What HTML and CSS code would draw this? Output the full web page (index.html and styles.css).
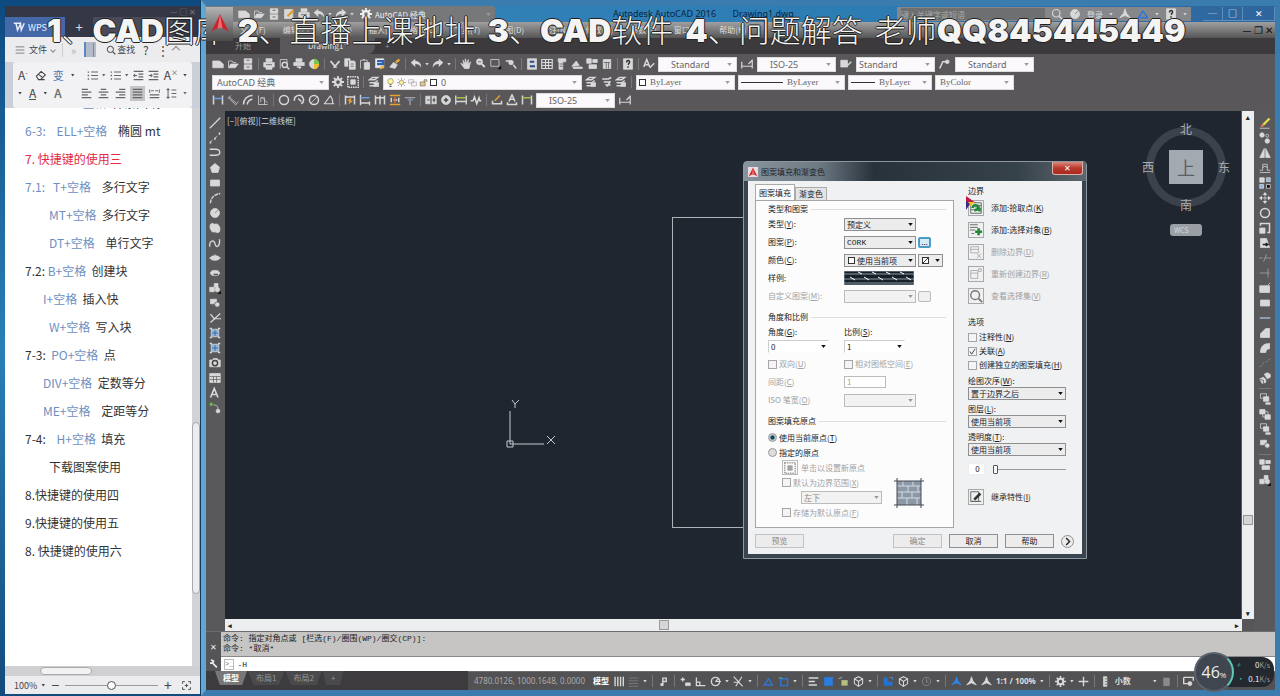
FILE: index.html
```
<!DOCTYPE html>
<html lang="zh-CN">
<head>
    <meta charset="UTF-8">
    <meta name="viewport" content="width=device-width, initial-scale=1.0">
    <title>Autodesk AutoCAD 2016 - Drawing1.dwg</title>
    <link rel="stylesheet" href="styles.css">
</head>
<body>

    <!-- Icon sprite -->
    <svg class="sprite" aria-hidden="true">
        <symbol id="i-new" viewBox="0 0 16 16"><path fill="currentColor" d="M1 4h9l5 4v5H1z"/></symbol>
        <symbol id="i-open" viewBox="0 0 16 16"><path d="M2 12V4h5l1 2h4"/><path fill="currentColor" d="M2 13l3-5h10l-4 5z"/></symbol>
        <symbol id="i-save" viewBox="0 0 16 16"><path fill="currentColor" d="M3 1h10v6H3zM3 9h10v6H3z"/><path stroke="#444" d="M6 3h4M6 12h4"/></symbol>
        <symbol id="i-saveas" viewBox="0 0 16 16"><path fill="currentColor" d="M2 2h11v12H2z"/><path stroke="#e0a030" stroke-width="3" d="M6 11l8-8"/></symbol>
        <symbol id="i-print" viewBox="0 0 16 16"><path fill="currentColor" d="M4 1h8v4H4zM1 6h14v6H1z"/><path stroke="#444" d="M4 9h8"/><path fill="currentColor" d="M4 11h8v4H4z"/></symbol>
        <symbol id="i-preview" viewBox="0 0 16 16"><path d="M3 14V2h9v5"/><circle cx="9" cy="9" r="3.5" stroke-width="2"/><path stroke-width="2" d="M12 12l3 3"/></symbol>
        <symbol id="i-publish" viewBox="0 0 16 16"><path fill="currentColor" d="M4 1h8v4H4zM1 6h14v4H1z"/><path stroke-width="2" d="M5 12h5M8 14l3-2"/></symbol>
        <symbol id="i-pie" viewBox="0 0 16 16"><circle cx="8" cy="8" r="6" fill="#d8d8d8"/><path fill="#79c64c" stroke="none" d="M8 8V1a7 7 0 0 1 7 7z"/><path fill="#efbe37" stroke="none" d="M8 8h7a7 7 0 0 1-7 7z"/></symbol>
        <symbol id="i-cut" viewBox="0 0 16 16"><path stroke-width="2.4" d="M2 4l6 7 6-7"/><path stroke-width="2" d="M6 13l2-2 2 2"/></symbol>
        <symbol id="i-copy" viewBox="0 0 16 16"><path fill="currentColor" d="M1 1h7v10H1zM7 4h7l1 2v9H7z"/><path stroke="#555" d="M6 3v12M9 8h4M9 11h4"/></symbol>
        <symbol id="i-paste" viewBox="0 0 16 16"><path d="M2 14V3h9v3M5 2h3"/><path fill="currentColor" d="M7 6h7v9H7z"/></symbol>
        <symbol id="i-match" viewBox="0 0 16 16"><path fill="#e8eef6" d="M2 1h11v12H2z"/><path stroke="#2f62b0" stroke-width="3" d="M4 4h8v4H4"/><path stroke="#e5b640" stroke-width="3" d="M8 14l5-3"/></symbol>
        <symbol id="i-brush" viewBox="0 0 16 16"><path fill="currentColor" d="M1 12l5-6 5 3-3 5z"/><path stroke="#e5a63c" stroke-width="3" d="M9 6l5-4"/></symbol>
        <symbol id="i-undo" viewBox="0 0 16 16"><path fill="currentColor" stroke="none" d="M1 6l6-5v3c5 0 8 3 8 9-2-4-4-5-8-5v4z"/></symbol>
        <symbol id="i-redo" viewBox="0 0 16 16"><path fill="currentColor" stroke="none" d="M15 6L9 1v3c-5 0-8 3-8 9 2-4 4-5 8-5v4z"/></symbol>
        <symbol id="i-pan" viewBox="0 0 16 16"><path fill="currentColor" d="M1 7l4 2-1-6 3 5V1l2 7 2-6v7l3-4-2 9H6z"/></symbol>
        <symbol id="i-zoom" viewBox="0 0 16 16"><circle cx="6" cy="5" r="4" fill="currentColor"/><path stroke-width="2.5" d="M9 8l4 4"/><path stroke="#555" d="M4 5h4"/></symbol>
        <symbol id="i-zoomwin" viewBox="0 0 16 16"><path d="M1 2h11v9H1z"/><path fill="#111" stroke="none" d="M15 10v5h-5z"/></symbol>
        <symbol id="i-zoomprev" viewBox="0 0 16 16"><path stroke-width="2" d="M1 4h6"/><circle cx="8" cy="6" r="3" fill="currentColor"/><path stroke-width="2" d="M11 9l4 5"/></symbol>
        <symbol id="i-props" viewBox="0 0 16 16"><path fill="currentColor" d="M2 1h12v14H2z"/><path stroke="#2d4b8d" stroke-width="2.5" d="M5 5h6M5 11h7"/></symbol>
        <symbol id="i-grid" viewBox="0 0 16 16"><path stroke-width="1.6" d="M1 2h14v12H1zM1 6h14M1 10h14M6 2v12M10 2v12"/></symbol>
        <symbol id="i-palette" viewBox="0 0 16 16"><path fill="currentColor" d="M3 1h10v4H9v10H4V5H3z"/><path stroke="#555" d="M5 8h4M5 11h4"/></symbol>
        <symbol id="i-sheet" viewBox="0 0 16 16"><path fill="currentColor" d="M1 11l6-7 4 6zM3 12h12v2H3z"/></symbol>
        <symbol id="i-markup" viewBox="0 0 16 16"><path fill="currentColor" d="M1 1h6v6H1zM9 2h6v4H9zM4 9h10v5H4z"/></symbol>
        <symbol id="i-calc" viewBox="0 0 16 16"><path fill="currentColor" d="M3 2h10v12H3z"/><path stroke="#555" d="M4 6h8M7 6v8M10 6v8"/></symbol>
        <symbol id="i-help" viewBox="0 0 16 16"><path fill="currentColor" d="M2 1h12v14H2z"/><path stroke="#333" stroke-width="2" d="M6 6c0-4 5-3 4 0L8 9M8 11v2"/></symbol>
        <symbol id="i-text" viewBox="0 0 16 16"><path stroke-width="2.2" d="M2 14L7 2l5 12M4 10h6"/></symbol>
        <symbol id="i-textstyle" viewBox="0 0 16 16"><path stroke-width="2" d="M1 12L5 2l4 10M2 9h6M9 13l6-6"/></symbol>
        <symbol id="i-dimstyle" viewBox="0 0 16 16"><path stroke-width="1.6" d="M1 5v9M15 2v12M1 11h14M10 8l5-5"/></symbol>
        <symbol id="i-tablestyle" viewBox="0 0 16 16"><path fill="currentColor" d="M1 3h9v9H1z"/><path stroke-width="2" d="M9 11l6-6"/></symbol>
        <symbol id="i-leader" viewBox="0 0 16 16"><path stroke-width="2" d="M1 14l4-9h6"/><circle cx="11" cy="5" r="2.5" fill="currentColor"/></symbol>
        <symbol id="i-gear" viewBox="0 0 16 16"><circle cx="8" cy="8" r="4" stroke-width="3"/><path stroke-width="2.4" d="M8 0v4M8 12v4M0 8h4M12 8h4M2.500 2.500l3 3M10.500 10.500l3 3M2.500 13.500l3-3M10.500 5.500l3-3"/></symbol>
        <symbol id="i-select" viewBox="0 0 16 16"><path stroke-dasharray="2 1" stroke-width="2" d="M1 1h14v14H1z"/><path fill="currentColor" d="M5 5h6v6H5z"/></symbol>
        <symbol id="i-layers" viewBox="0 0 16 16"><path stroke-width="1.8" d="M2 5h7l4-3H6zM2 9h7l4-3M2 13h7l5-4"/><path fill="currentColor" d="M8 9h6v5H8z"/></symbol>
        <symbol id="i-layerprev" viewBox="0 0 16 16"><path stroke-width="2" d="M3 4h8l4-2M5 8h8M7 12h7M9 14l5-7"/></symbol>
        <symbol id="i-bulb" viewBox="0 0 16 16"><circle cx="8" cy="6" r="5" fill="#fbf6a0" stroke="#776"/><path stroke="#665" stroke-width="2" d="M6 12h4M6 15h4"/></symbol>
        <symbol id="i-sun" viewBox="0 0 16 16"><circle cx="8" cy="8" r="4" fill="#f8ef9a" stroke="#776"/><path stroke="#665" d="M8 0v3M8 13v3M0 8h3M13 8h3M2 2l2 2M12 12l2 2M2 14l2-2M12 4l2-2"/></symbol>
        <symbol id="i-vp" viewBox="0 0 16 16"><path stroke="#999" d="M1 3h9v6H1zM6 7h9v7H6z"/></symbol>
        <symbol id="i-lock" viewBox="0 0 16 16"><path fill="#e0c990" stroke="#665" d="M2 7h9v7H2zM9 7V3h5v4"/></symbol>
        <!-- Dimension toolbar -->
        <symbol id="i-dimlin" viewBox="0 0 16 16"><path stroke-width="2" d="M2 2v12M14 2v12"/><path stroke="#6ca0e4" stroke-width="2" d="M2 6h12"/></symbol>
        <symbol id="i-dimali" viewBox="0 0 16 16"><path d="M2 5l9 9M5 2l-4 4M15 10l-4 5M3 4l9 8"/></symbol>
        <symbol id="i-dimarc" viewBox="0 0 16 16"><path stroke-width="2" d="M2 14C2 7 7 2 14 2M7 14c0-3 3-7 7-7"/></symbol>
        <symbol id="i-dimord" viewBox="0 0 16 16"><path d="M2 2v12h12M5 11V5h5v9M6 4l8 8"/></symbol>
        <symbol id="i-circle" viewBox="0 0 16 16"><circle cx="8" cy="8" r="6" stroke-width="2"/></symbol>
        <symbol id="i-jog" viewBox="0 0 16 16"><path stroke-width="2" d="M2 9a6 6 0 1 1 9 4M7 6l4 4"/></symbol>
        <symbol id="i-dia" viewBox="0 0 16 16"><circle cx="8" cy="8" r="6" stroke-width="2"/><path d="M4 12l8-8"/></symbol>
        <symbol id="i-angle" viewBox="0 0 16 16"><path stroke-width="1.6" d="M1 13h14M2 13L10 2M10 3c3 3 3 6 3 10"/></symbol>
        <symbol id="i-quick" viewBox="0 0 16 16"><path stroke-width="2" d="M2 2v12M14 2v12M2 4h12"/><path fill="#e6a331" stroke="none" d="M5 8l5-3-1 4h3l-6 5 1-4z"/></symbol>
        <symbol id="i-base" viewBox="0 0 16 16"><path stroke-width="1.8" d="M2 1v14M2 12h12M14 10v5"/><path stroke="#6ca0e4" stroke-width="2" d="M2 5h12"/></symbol>
        <symbol id="i-cont" viewBox="0 0 16 16"><path stroke-width="2" d="M2 2v12M8 2v12M14 2v12M2 5h12"/></symbol>
        <symbol id="i-space" viewBox="0 0 16 16"><path stroke="#e6a331" stroke-width="2" d="M1 2h14M1 14h14"/><path stroke-width="2" d="M3 5v6M13 5v6M6 8h5"/><path stroke="#df6a35" stroke-width="2" d="M8 4v8"/></symbol>
        <symbol id="i-break" viewBox="0 0 16 16"><path d="M1 5h14M8 6v9"/><path stroke="#6c8bb4" stroke-width="2" d="M5 8h7"/></symbol>
        <symbol id="i-tol" viewBox="0 0 16 16"><path fill="currentColor" d="M1 3h14v10H1z"/><path stroke="#444" stroke-width="1.5" d="M8 3v10M3 8h3M12 5v6M10 8h4"/></symbol>
        <symbol id="i-center" viewBox="0 0 16 16"><circle cx="8" cy="8" r="6" fill="currentColor"/><path stroke="#444" stroke-width="2" d="M8 5v6M5 8h6"/></symbol>
        <symbol id="i-inspect" viewBox="0 0 16 16"><path stroke-width="1.8" d="M1 2v12M15 2v12M1 10h14"/><path stroke="#a5bf45" stroke-width="2" d="M2 5h12"/></symbol>
        <symbol id="i-jogline" viewBox="0 0 16 16"><path stroke-width="2" d="M1 9h3l2-5 3 9 3-8 1 4h2"/></symbol>
        <symbol id="i-dimedit" viewBox="0 0 16 16"><path stroke-width="2" d="M1 13h14M2 9v5M14 9v5"/><path stroke="#e6a331" stroke-width="2" d="M5 9l7-7"/></symbol>
        <symbol id="i-dimtext" viewBox="0 0 16 16"><path stroke-width="2" d="M1 14h14M2 11v4M14 11v4M4 10l4-9 4 9M5 7h6"/></symbol>
        <symbol id="i-dimupd" viewBox="0 0 16 16"><path stroke-width="2" d="M2 2v12M14 2v12"/><path stroke="#a5bf45" stroke-width="2" d="M2 5h12"/></symbol>
        <!-- Draw toolbar -->
        <symbol id="i-line" viewBox="0 0 16 16"><path stroke-width="1.6" d="M1 15L15 1"/></symbol>
        <symbol id="i-xline" viewBox="0 0 16 16"><path stroke-dasharray="5 3" d="M1 14L15 2"/><path stroke-width="2.5" d="M1 14h2M13 2h2M7 9h2"/></symbol>
        <symbol id="i-pline" viewBox="0 0 16 16"><path stroke-width="1.8" d="M1 3h8c7 0 7 8 1 8H1"/></symbol>
        <symbol id="i-polygon" viewBox="0 0 16 16"><path fill="currentColor" d="M8 2l6 5-2 7H4L2 7z"/></symbol>
        <symbol id="i-rect" viewBox="0 0 16 16"><path fill="currentColor" d="M2 4h12v8H2z"/></symbol>
        <symbol id="i-arc" viewBox="0 0 16 16"><path stroke-width="1.8" stroke-dasharray="5 1" d="M2 15C2 8 7 3 15 2"/></symbol>
        <symbol id="i-disc" viewBox="0 0 16 16"><circle cx="8" cy="8" r="6" fill="currentColor"/><path stroke="#777" d="M8 8l4-4"/></symbol>
        <symbol id="i-cloud" viewBox="0 0 16 16"><path fill="currentColor" d="M2 3c2-2 4-1 5 0 3-1 6 0 6 2 2 2 2 4 1 8-3 2-5 1-6 0-3 1-5 0-5-2-2-2-2-5-1-8z"/></symbol>
        <symbol id="i-spline" viewBox="0 0 16 16"><path stroke-width="1.8" d="M1 13c-1-9 6-10 7-4s7 5 6-6"/></symbol>
        <symbol id="i-ellipse" viewBox="0 0 16 16"><ellipse cx="8" cy="8" rx="6" ry="3" fill="currentColor"/><path d="M0 8h16M8 3v8"/></symbol>
        <symbol id="i-ellarc" viewBox="0 0 16 16"><ellipse cx="8" cy="8" rx="6" ry="3.500" fill="currentColor"/><path stroke="#555" stroke-width="2" d="M6 10h6"/></symbol>
        <symbol id="i-insert" viewBox="0 0 16 16"><path fill="currentColor" d="M1 7h6v6H1zM7 2h5v5H7z"/><circle cx="11" cy="10" r="3" fill="currentColor"/><path fill="#111" stroke="none" d="M16 12v4h-5z"/></symbol>
        <symbol id="i-block" viewBox="0 0 16 16"><path fill="currentColor" d="M2 3h8v6H2z"/><circle cx="11" cy="10" r="3.500" fill="currentColor" stroke="#555"/></symbol>
        <symbol id="i-point" viewBox="0 0 16 16"><path stroke-width="1.6" d="M2 3l6 7M15 2L2 14M8 9h8"/></symbol>
        <symbol id="i-hatch" viewBox="0 0 16 16"><path fill="#8cb7e2" d="M3 3h10v10H3z"/><path stroke-width="2" d="M1 2h3M12 2h3M1 14h3M12 14h3"/><path stroke="#36577f" d="M4 8h8M8 4v8"/></symbol>
        <symbol id="i-region" viewBox="0 0 16 16"><path fill="currentColor" d="M1 4h4l1-2h5l1 2h3v9H1z"/><circle cx="8" cy="8" r="3.500" stroke="#444" stroke-width="2"/></symbol>
        <symbol id="i-table" viewBox="0 0 16 16"><path fill="currentColor" d="M1 2h14v12H1z"/><path stroke="#666" d="M1 6h14M1 10h14M6 6v8M10 6v8"/></symbol>
        <symbol id="i-addsel" viewBox="0 0 16 16"><path stroke="#6cbf4b" stroke-width="2.5" d="M1 3h4M3 1v4"/><path d="M6 4c5 0 6 2 6 6"/><circle cx="12" cy="12" r="2.500" fill="currentColor"/></symbol>
        <!-- Modify toolbar -->
        <symbol id="i-erase" viewBox="0 0 16 16"><path stroke="#eadc4a" stroke-width="3" d="M5 11l9-9"/><path stroke="#e0795c" stroke-width="3" d="M3 13l3-3"/><path d="M1 15h13"/></symbol>
        <symbol id="i-copyobj" viewBox="0 0 16 16"><circle cx="4" cy="4" r="3" fill="currentColor"/><circle cx="11" cy="5" r="2"/><circle cx="11" cy="12" r="3" fill="currentColor"/></symbol>
        <symbol id="i-mirror" viewBox="0 0 16 16"><path fill="currentColor" d="M7 2v12H1zM9 2v12h6z"/></symbol>
        <symbol id="i-offset" viewBox="0 0 16 16"><path d="M1 14h14M1 11h4C3 4 13 4 11 11h4M5 8V3h6v5"/></symbol>
        <symbol id="i-array" viewBox="0 0 16 16"><path fill="currentColor" d="M1 1h6v6H1z"/><path fill="#8cb7e2" d="M10 1h5v5h-5zM1 10h5v5H1z"/><path fill="#111" d="M10 10h5v5h-5z"/></symbol>
        <symbol id="i-move" viewBox="0 0 16 16"><path fill="currentColor" stroke="none" d="M8 0l3 4H5zM8 16l3-4H5zM0 8l4-3v6zM16 8l-4-3v6z"/><path d="M8 4v8M4 8h8"/></symbol>
        <symbol id="i-scale" viewBox="0 0 16 16"><path fill="currentColor" d="M1 8h7v7H1z"/><path stroke-width="2" d="M2 5V2h12v12h-3"/></symbol>
        <symbol id="i-stretch" viewBox="0 0 16 16"><path fill="currentColor" d="M2 2h8l4 12H2z"/><path stroke="#222" stroke-width="2" d="M5 10h6M9 8l3 2-3 2"/></symbol>
        <symbol id="i-trim" viewBox="0 0 16 16"><path stroke="#aaa" d="M0 8h5M8 8h8M6 13L10 3"/></symbol>
        <symbol id="i-extend" viewBox="0 0 16 16"><path stroke="#aaa" d="M1 8h8M12 2v12M9 8h5"/></symbol>
        <symbol id="i-breakat" viewBox="0 0 16 16"><path fill="currentColor" d="M1 5h13v9H1z"/><path d="M12 4l3-3"/></symbol>
        <symbol id="i-join" viewBox="0 0 16 16"><path stroke="#9fb5cf" stroke-width="2" d="M1 8h5M10 8h5M6 8h4"/></symbol>
        <symbol id="i-chamfer" viewBox="0 0 16 16"><path fill="currentColor" d="M2 14V9l7-7h5v12z"/></symbol>
        <symbol id="i-fillet" viewBox="0 0 16 16"><path fill="currentColor" d="M2 14C2 6 6 2 14 2v7c-3 0-5 2-5 5z"/></symbol>
        <symbol id="i-blend" viewBox="0 0 16 16"><path stroke="#8ba2bd" stroke-dasharray="3 2" d="M1 13c4-1 3-5 7-6s4-2 7-5"/></symbol>
        <symbol id="i-explode" viewBox="0 0 16 16"><path fill="currentColor" d="M1 9l5-2 3 3v4l-5 1zM7 3l4-2 4 2v4l-4 2z"/><path stroke="#555" d="M1 10l5 1v4"/></symbol>
        <symbol id="i-front" viewBox="0 0 16 16"><path d="M2 1h8v6H2z"/><path fill="currentColor" d="M6 5h7v6H6zM9 13h6v2H9z"/></symbol>
        <symbol id="i-back" viewBox="0 0 16 16"><path fill="currentColor" d="M1 2h7v6H1zM8 9h7v6H8z"/><path d="M5 5h7v7H5z"/></symbol>
        <!-- Status bar -->
        <symbol id="i-bars" viewBox="0 0 16 16"><path stroke-width="2" d="M3 1v14M7 1v14M11 1v14M15 1v14"/></symbol>
        <symbol id="i-dim" viewBox="0 0 16 16"><path stroke="#888" d="M1 3h14M1 7h14M1 11h14M1 15h14"/></symbol>
        <symbol id="i-infer" viewBox="0 0 16 16"><path stroke-width="2" d="M7 14V3h5v5H7"/><path fill="currentColor" d="M4 11h3v3H4z"/></symbol>
        <symbol id="i-dyn" viewBox="0 0 16 16"><path stroke-width="2" d="M1 5h6M4 2v6"/><path fill="currentColor" d="M8 10h7v4H8z"/></symbol>
        <symbol id="i-ortho" viewBox="0 0 16 16"><path stroke-width="1.800" d="M2 2v12h13M2 9h5v5"/></symbol>
        <symbol id="i-polar" viewBox="0 0 16 16"><circle cx="8" cy="8" r="6" stroke-width="2"/><path stroke-width="1.600" d="M8 8h8M8 8l5-5"/></symbol>
        <symbol id="i-iso" viewBox="0 0 16 16"><path stroke-width="1.600" d="M1 1l13 14M13 1L4 15M1 9h7"/></symbol>
        <symbol id="i-track" viewBox="0 0 16 16"><path stroke="#2f76d8" stroke-width="2" d="M2 13l6-9 6 9z"/></symbol>
        <symbol id="i-osnap" viewBox="0 0 16 16"><path stroke="#2f76d8" stroke-width="2" d="M4 4h10v10H4z"/><path stroke="#4cae5a" stroke-width="2" d="M1 3h5"/></symbol>
        <symbol id="i-lines" viewBox="0 0 16 16"><path stroke-width="2.200" d="M1 3h14M1 8h9M1 13h12"/></symbol>
        <symbol id="i-blue" viewBox="0 0 16 16"><path fill="#287fe0" stroke="#2f76d8" d="M2 2h12v12H2z"/></symbol>
        <symbol id="i-cycle" viewBox="0 0 16 16"><path fill="#b5bf82" stroke="none" d="M5 6h9v8H5z"/><path d="M1 4l5-2"/></symbol>
        <symbol id="i-cube" viewBox="0 0 16 16"><path stroke-width="1.500" d="M8 1l6 3v7l-6 4-6-4V4zM2 4l6 4 6-4M8 8v7"/></symbol>
        <symbol id="i-gizmo" viewBox="0 0 16 16"><path fill="#2373ce" stroke="none" d="M1 2h6v6h7v6H1z"/><path stroke="#5199e8" d="M9 2h5v4"/></symbol>
        <symbol id="i-clock" viewBox="0 0 16 16"><circle cx="8" cy="8" r="6" stroke="#999"/><path stroke="#999" d="M8 4v5h3"/></symbol>
        <symbol id="i-anno" viewBox="0 0 16 16"><path fill="currentColor" d="M8 1l2 6 5 6-7-3-7 3 5-6z"/></symbol>
        <symbol id="i-plus" viewBox="0 0 16 16"><path stroke-width="2" d="M8 1v14M1 8h14"/></symbol>
        <symbol id="i-ruler" viewBox="0 0 16 16"><path fill="currentColor" d="M5 1h5v14H5z"/><path stroke="#555" d="M7 4h3M7 8h3M7 12h3"/></symbol>
        <symbol id="i-quickp" viewBox="0 0 16 16"><path stroke="#999" fill="#888" d="M4 3h8v11H4z"/></symbol>
        <symbol id="i-screen" viewBox="0 0 16 16"><path stroke-width="2" d="M1 2h14v5M1 2v9h6"/><circle cx="10" cy="11" r="3" fill="currentColor"/></symbol>
        <!-- WPS ribbon -->
        <symbol id="i-menu" viewBox="0 0 16 16"><path d="M1 3h14M1 8h14M1 13h14"/></symbol>
        <symbol id="i-search" viewBox="0 0 16 16"><circle cx="7" cy="7" r="5" stroke-width="1.600"/><path stroke-width="2" d="M11 11l4 4"/></symbol>
        <symbol id="i-eraser" viewBox="0 0 16 16"><path stroke-width="1.600" d="M2 9l7-7 6 5-7 7H5zM5 6l6 5M5 14h9"/></symbol>
        <symbol id="i-list" viewBox="0 0 16 16"><path stroke-width="1.600" d="M6 3h10M6 8h10M6 13h10"/><path stroke-width="2" d="M1 3h2M1 8h2M1 13h2"/></symbol>
        <symbol id="i-outdent" viewBox="0 0 16 16"><path stroke-width="1.500" d="M1 2h14M8 6h7M8 10h7M1 14h14M6 8H1M3 6L1 8l2 2"/></symbol>
        <symbol id="i-indent" viewBox="0 0 16 16"><path stroke-width="1.500" d="M1 2h14M8 6h7M8 10h7M1 14h14M1 8h5M4 6l2 2-2 2"/></symbol>
        <symbol id="i-left" viewBox="0 0 16 16"><path stroke-width="1.500" d="M1 2h9M1 6h14M1 10h9M1 14h14"/></symbol>
        <symbol id="i-mid" viewBox="0 0 16 16"><path stroke-width="1.500" d="M4 2h8M1 6h14M4 10h8M1 14h14"/></symbol>
        <symbol id="i-right" viewBox="0 0 16 16"><path stroke-width="1.500" d="M6 2h9M1 6h14M6 10h9M1 14h14"/></symbol>
        <symbol id="i-justify" viewBox="0 0 16 16"><path stroke-width="1.500" d="M1 2h14M1 6h14M1 10h14M1 14h14"/></symbol>
        <symbol id="i-spread" viewBox="0 0 16 16"><path stroke-width="1.500" d="M1 2v5M15 2v5M3 4h4M9 4h4M1 10h14M1 14h14"/></symbol>
        <symbol id="i-height" viewBox="0 0 16 16"><path stroke-width="1.500" d="M3 1v14M1 3l2-2 2 2M1 13l2 2 2-2M8 3h7M8 8h7M8 13h7"/></symbol>
        <symbol id="i-fit" viewBox="0 0 16 16"><path stroke-width="1.600" d="M1 5V1h4M11 1h4v4M15 11v4h-4M5 15H1v-4M5 8h6M8 5v6"/></symbol>
        <symbol id="i-logo" viewBox="0 0 16 16"><path fill="#c92230" stroke="none" d="M8 1l7 14-5-3H6l-5 3z"/><path fill="#f26a6a" stroke="none" d="M8 1l2 11H6z"/></symbol>
        <symbol id="i-wrench" viewBox="0 0 16 16"><path stroke-width="3" d="M7 8l7 7M8 2C8 7 7 8 2 7M4 1l3 3"/></symbol>
    </svg>

    <!-- WPS window -->
    <section class="wps">
        <header class="wps-title">
            <button class="wps-home"><svg class="icon" viewBox="0 0 16 16"><path stroke-width="2" d="M1 3h3l2 9 4-8 1 8 4-9M4 3h7"/></svg>WPS</button>
            <button class="wps-plus">+</button>
            <span class="wps-tab"></span>
            <span class="wps-min">— □ ✕</span>
        </header>
        <nav class="wps-menu">
            <svg class="icon"><use href="#i-menu"/></svg>
            <button>文件</button>
            <span class="chev"></span>
            <i class="vline"></i>
            <span class="more">»</span>
            <button class="pressed" aria-label="tab"><span class="chev"></span></button>
            <button class="find"><svg class="icon"><use href="#i-search"/></svg>查找</button>
            <button class="big">?</button>
            <button class="big">⋮</button>
            <span class="chev up"></span>
        </nav>
        <div class="ribbon">
            <div class="ribbon-inner">
                <div class="ribbon-row">
                    <div class="font-tools"><button>A<sup>-</sup></button><button aria-label="eraser"><svg class="icon"><use href="#i-eraser"/></svg></button><button class="pinyin">变</button><i class="caret"></i></div>
                    <div class="tools" data-icons="list v list v outdent indent"></div>
                    <button>A<sup>×</sup></button><i class="caret"></i>
                </div>
                <div class="ribbon-row">
                    <div class="font-tools"><i class="caret"></i><button class="under">A</button><i class="caret"></i><button class="shade">A</button></div>
                    <div class="tools wide" data-icons="left mid right justify spread height v"></div>
                </div>
            </div>
        </div>
        <div class="wps-body">
            <article class="doc">
                <p>           <span class="key">SPL+空格</span>  样条曲线</p>
                <p><span class="key">6-3:    ELL+空格</span>    椭圆 mt</p>
                <p class="red">7. 快捷键的使用三</p>
                <p><span class="key">7.1:   T+空格</span>    多行文字</p>
                <p class="in2"><span class="key">MT+空格</span>  多行文字</p>
                <p class="in2"><span class="key">DT+空格</span>    单行文字</p>
                <p>7.2: <span class="key">B+空格</span>  创建块</p>
                <p class="in1"><span class="key">I+空格</span>  插入快</p>
                <p class="in2"><span class="key">W+空格</span>  写入块</p>
                <p>7-3:  <span class="key">PO+空格</span>  点</p>
                <p class="in1"><span class="key">DIV+空格</span>  定数等分</p>
                <p class="in1"><span class="key">ME+空格</span>    定距等分</p>
                <p>7-4:    <span class="key">H+空格</span>  填充</p>
                <p class="in2">下载图案使用</p>
                <p>8.快捷键的使用四</p>
                <p>9.快捷键的使用五</p>
                <p>8. 快捷键的使用六</p>
            </article>
            <div class="wps-vscroll"><i></i></div>
        </div>
        <div class="wps-hscroll"><i></i></div>
        <footer class="zoombar">
            <label for="zoom">100%</label>
            <i class="caret"></i>
            <button>−</button>
            <input id="zoom" type="range" min="0" max="100" value="50">
            <button>+</button>
            <svg class="icon"><use href="#i-fit"/></svg>
        </footer>
    </section>

    <!-- AutoCAD window -->
    <section class="cad">
        <header class="cad-title">
            <button class="app-btn" aria-label="AutoCAD"><svg viewBox="0 0 16 16"><use href="#i-logo"/></svg></button>
            <div class="qat">
                <div class="tools" data-icons="new open save saveas print undo v redo v"></div>
                <label class="ws"><svg class="icon"><use href="#i-gear"/></svg><select aria-label="workspace"><option>AutoCAD 经典</option></select></label>
            </div>
            <h1>Autodesk AutoCAD 2016 <span>Drawing1.dwg</span></h1>
            <div class="info">
                <input type="search" aria-label="search" placeholder="键入关键字或短语">
                <div class="tools" data-icons="search disc"></div><span>登录</span>
                <div class="tools" data-icons="v anno track v help v"></div>
            </div>
            <div class="winbtns"><button>─</button><button>□</button><button>✕</button></div>
        </header>
        <nav class="menubar">
            <a href="#">文件(F)</a><a href="#">编辑(E)</a><a href="#">视图(V)</a><a href="#">插入(I)</a><a href="#">格式(O)</a><a href="#">工具(T)</a><a href="#">绘图(D)</a><a href="#">标注(N)</a><a href="#">修改(M)</a><a href="#">参数(P)</a><a href="#">窗口(W)</a><a href="#">帮助(H)</a>
            <span class="mdi">— ❐ ✕</span>
        </nav>
        <div class="filetabs">
            <button>开始</button>
            <button class="active">Drawing1*</button>
            <button class="add">+</button>
        </div>

        <div class="toolbars">
            <div class="bar">
                <div class="tools" data-icons="new open save | print preview publish pie | cut copy paste match brush | undo v redo v | pan zoom zoomwin zoomprev | props grid palette sheet markup calc | help | textstyle"></div>
                <select class="w79" aria-label="text style"><option>Standard</option></select>
                <div class="tools style" data-icons="dimstyle"></div>
                <select class="w79" aria-label="dimension style"><option>ISO-25</option></select>
                <div class="tools style" data-icons="tablestyle"></div>
                <select class="w79 near" aria-label="table style"><option>Standard</option></select>
                <div class="tools style" data-icons="leader"></div>
                <select class="w79" aria-label="leader style"><option>Standard</option></select>
            </div>
            <div class="bar">
                <select class="w117" aria-label="workspace"><option>AutoCAD 经典</option></select>
                <div class="tools" data-icons="gear select | layers"></div>
                <label class="combo w199"><svg class="icon"><use href="#i-bulb"/></svg><svg class="icon"><use href="#i-sun"/></svg><svg class="icon"><use href="#i-vp"/></svg><svg class="icon"><use href="#i-lock"/></svg><i class="swatch"></i><select aria-label="layer"><option>0</option></select></label>
                <div class="tools" data-icons="layers layerprev layers |"></div>
                <label class="combo serif w99"><i class="swatch"></i><select aria-label="color"><option>ByLayer</option></select></label>
                <label class="combo serif w107"><i class="rule"></i><select aria-label="linetype"><option>ByLayer</option></select></label>
                <label class="combo serif w84"><i class="rule short"></i><select aria-label="lineweight"><option>ByLayer</option></select></label>
                <label class="combo serif w79"><select aria-label="plot style"><option>ByColor</option></select></label>
            </div>
            <div class="bar">
                <div class="tools" data-icons="dimlin dimali dimarc dimord | circle jog dia angle | quick base cont space break | tol center inspect jogline | dimedit dimtext dimupd"></div>
                <select class="w79" aria-label="current dimension style"><option>ISO-25</option></select>
                <div class="tools style" data-icons="dimstyle"></div>
            </div>
        </div>

        <main class="work">
            <div class="side"><div class="tools" data-icons="line xline pline polygon rect arc disc cloud spline ellipse ellarc insert block point hatch hatch region table text addsel"></div></div>
            <div class="view">
                <div class="canvas">
                    <span class="vp-label">[−][俯视][二维线框]</span>
                    <div class="drawn-rect"></div>
                    <svg class="ucs" viewBox="0 0 54 54"><path d="M5 48V15M5 48h34M2 45h6v6H2zM7 4l3 4v4M14 4l-4 4M42 40l8 8M50 40l-8 8"/></svg>
                    <div class="compass">
                        <i class="ring"></i>
                        <span class="n">北</span><span class="w">西</span><button>上</button><span class="e">东</span><span class="s">南</span>
                    </div>
                    <button class="wcs">WCS</button>

                    <!-- Hatch and Gradient dialog -->
                    <form class="dialog">
                        <header><svg viewBox="0 0 16 16"><use href="#i-logo"/></svg>图案填充和渐变色<button type="button" class="close">✕</button></header>
                        <div class="dlg-body">
                            <div class="dlg-main">
                                <div class="dlg-left">
                                    <div class="dlg-tabs"><button type="button" class="on">图案填充</button><button type="button">渐变色</button></div>
                                    <div class="page">
                                        <fieldset>
                                            <legend>类型和图案</legend>
                                            <div class="row"><label for="type">类型(<u>Y</u>):</label><select id="type" class="s72"><option>预定义</option></select></div>
                                            <div class="row"><label for="pat">图案(<u>P</u>):</label><select id="pat" class="s72 mono"><option>CORK</option></select><button type="button" class="dots">...</button></div>
                                            <div class="row"><label for="col">颜色(<u>C</u>):</label><span class="selbox s72"><i class="swatch"></i><select id="col"><option>使用当前项</option></select></span><span class="selbox s24"><i class="swatch none"></i><select aria-label="background"><option> </option></select></span></div>
                                            <div class="row"><span class="lab">样例:</span><svg class="sample" viewBox="0 0 70 14"><rect width="70" height="14"/><path d="M0 3h70M0 8h70M0 12h70"/><path class="dash" d="M14 1l4 2M28 1l4 2M42 1l4 2M56 1l4 2M6 6l5 3M20 6l5 3M34 6l5 3M48 6l5 3M62 6l5 3"/></svg></div>
                                            <div class="row off"><label for="cust">自定义图案(<u>M</u>):</label><select id="cust" class="s72" disabled><option></option></select><button type="button" class="dots" disabled aria-label="browse"></button></div>
                                        </fieldset>
                                        <fieldset>
                                            <legend>角度和比例</legend>
                                            <div class="pair">
                                                <label for="ang">角度(<u>G</u>):</label><label for="scale">比例(<u>S</u>):</label>
                                                <select id="ang" class="flat"><option>0</option></select><select id="scale" class="flat"><option>1</option></select>
                                            </div>
                                            <div class="row off two"><label><input type="checkbox" disabled>双向(<u>U</u>)</label><label><input type="checkbox" disabled>相对图纸空间(<u>E</u>)</label></div>
                                            <div class="row off"><label for="gap">间距(<u>C</u>)</label><input id="gap" type="text" value="1" disabled></div>
                                            <div class="row off"><label for="pen">ISO 笔宽(<u>O</u>)</label><select id="pen" class="s72" disabled><option></option></select></div>
                                        </fieldset>
                                        <fieldset class="origin">
                                            <legend>图案填充原点</legend>
                                            <label><input type="radio" name="origin" checked>使用当前原点(<u>T</u>)</label>
                                            <label><input type="radio" name="origin">指定的原点</label>
                                            <div class="origin-opts">
                                                <div class="off">
                                                    <span><button type="button" class="pick" disabled aria-label="pick origin"><svg class="icon"><use href="#i-select"/></svg></button>单击以设置新原点</span>
                                                    <label><input type="checkbox" disabled>默认为边界范围(<u>X</u>)</label>
                                                    <label class="deep"><select disabled aria-label="origin position"><option>左下</option></select></label>
                                                    <label><input type="checkbox" disabled>存储为默认原点(<u>F</u>)</label>
                                                </div>
                                                <svg class="bricks" viewBox="0 0 30 30"><path class="fill" d="M3 3h24v24H3z"/><path class="gap" d="M3 8h24M3 14h24M3 20h24M9 3v5M19 3v5M14 8v6M24 8v6M8 14v6M18 14v6M13 20v7M23 20v7"/><path class="edge" d="M0 3h30M27 0v30M3 0v30M0 27h30"/></svg>
                                            </div>
                                        </fieldset>
                                    </div>
                                </div>
                                <div class="dlg-right">
                                    <h2>边界</h2>
                                    <div class="act"><button type="button" id="b1" aria-label="pick points"><svg viewBox="0 0 16 16"><path class="g" d="M2 2h12v12H2zM2 10h6V5h6"/><path class="gr" d="M4 8c1-4 5-4 7-1l-2 3-3 1M12 8v4"/></svg></button><label for="b1">添加:拾取点(<u>K</u>)</label></div>
                                    <div class="act"><button type="button" id="b2" aria-label="select objects"><svg viewBox="0 0 16 16"><path class="g" d="M1 2h9M1 5h9M1 8h6M3 12h3"/><path class="gr" d="M11 6v8M7 10h8"/></svg></button><label for="b2">添加:选择对象(<u>B</u>)</label></div>
                                    <div class="act off"><button type="button" id="b3" disabled aria-label="remove"><svg viewBox="0 0 16 16"><path class="g" d="M2 2h9v7H2zM2 5h9M9 10l5 5M14 10l-5 5"/></svg></button><label for="b3">删除边界(<u>D</u>)</label></div>
                                    <div class="act off"><button type="button" id="b4" disabled aria-label="recreate"><svg viewBox="0 0 16 16"><path class="g" d="M2 4h8v9H2zM2 7h8M11 2h3v3h-3z"/></svg></button><label for="b4">重新创建边界(<u>R</u>)</label></div>
                                    <div class="act off"><button type="button" id="b5" disabled aria-label="view selection"><svg class="dk" viewBox="0 0 16 16"><use href="#i-search"/></svg></button><label for="b5">查看选择集(<u>V</u>)</label></div>
                                    <h2 class="opt">选项</h2>
                                    <label class="chk"><input type="checkbox">注释性(<u>N</u>)</label>
                                    <label class="chk"><input type="checkbox" checked>关联(<u>A</u>)</label>
                                    <label class="chk"><input type="checkbox">创建独立的图案填充(<u>H</u>)</label>
                                    <label class="stack">绘图次序(<u>W</u>):<select><option>置于边界之后</option></select></label>
                                    <label class="stack">图层(<u>L</u>):<select><option>使用当前项</option></select></label>
                                    <label class="stack">透明度(<u>T</u>):<select><option>使用当前项</option></select></label>
                                    <div class="trans"><input type="text" value="0" aria-label="transparency"><input type="range" min="0" max="90" value="0" aria-label="transparency slider"></div>
                                    <div class="act inherit"><button type="button" id="b6" aria-label="inherit"><svg viewBox="0 0 16 16"><path class="g" d="M2 2h9v11H2zM2 13h12"/><path class="dkp" d="M6 11l7-7"/></svg></button><label for="b6">继承特性(<u>I</u>)</label></div>
                                </div>
                            </div>
                            <footer>
                                <button type="button" disabled>预览</button>
                                <button type="button" class="push" disabled>确定</button>
                                <button type="button">取消</button>
                                <button type="button">帮助</button>
                                <button type="button" class="round" aria-label="more"><svg viewBox="0 0 16 16"><path d="M6 3l5 5-5 5"/></svg></button>
                            </footer>
                        </div>
                        <svg class="cursor" viewBox="0 0 10 14"><path fill="#c01848" d="M0 0l10 7H0z"/><path fill="#e8c820" d="M2 6h7l-5 4z"/><path fill="#3a2a80" d="M0 5l4 3-4 6z"/></svg>
                    </form>
                </div>
                <div class="vscroll"><b>▴</b><i></i><b>▾</b></div>
                <div class="hscroll"><b>◂</b><i></i><b>▸</b></div>
            </div>
            <div class="side modify"><div class="tools" data-icons="erase copyobj mirror offset array move circle scale stretch trim extend breakat rect join chamfer fillet blend explode | front back front block | markup insert"></div></div>
        </main>

        <div class="command">
            <div class="cmd-side"><button>✕</button><button aria-label="customize"><svg class="icon"><use href="#i-wrench"/></svg></button></div>
            <div class="cmd-main">
                <pre>命令: 指定对角点或 [栏选(F)/圈围(WP)/圈交(CP)]:
命令: *取消*</pre>
                <div class="prompt"><i>&gt;_</i><input type="text" value="-H" aria-label="command"></div>
            </div>
        </div>

        <footer class="status">
            <div class="layouts"><button class="active">模型</button><button>布局1</button><button>布局2</button><button>+</button></div>
            <div class="status-right">
                <span class="coords">4780.0126, 1000.1648, 0.0000</span>
                <button class="model">模型</button>
                <div class="tools" data-icons="bars dim v | infer | dyn ortho polar v iso v | track osnap v | lines blue cycle cube v | gizmo cube v clock v |"></div>
                <div class="tools blue" data-icons="anno"></div>
                <div class="tools" data-icons="anno anno"></div>
                <span class="scale">1:1 / 100%</span>
                <div class="tools" data-icons="v | gear v plus | ruler"></div>
                <span class="units">小数</span>
                <div class="tools" data-icons="v quickp | screen"></div>
            </div>
        </footer>
    </section>

    <!-- Floating overlays -->
    <div class="banner"><b>1</b>、<b>CAD</b>图库<b class="next">2</b>、直播上课地址<b class="next">3</b>、<b>CAD</b>软件<b class="next">4</b>、问题解答<span class="next">老师</span><b>QQ845445449</b></div>
    <div class="netspeed">
        <div class="ball">46<small>%</small></div>
        <div class="rates"><span><i class="up">+</i>0<small>K/s</small></span><span><i>•</i>0.1<small>K/s</small></span></div>
    </div>

    <script>
        // fill each toolbar: "|" is a separator, "v" a drop-down arrow
        document.querySelectorAll("[data-icons]").forEach(function (bar) {
            bar.innerHTML = bar.dataset.icons.split(" ").map(function (name) {
                if (name === "|") return '<i class="sep"></i>';
                if (name === "v") return '<i class="caret"></i>';
                return `<button type="button" class="${name}" aria-label="${name}"><svg class="icon"><use href="#i-${name}"/></svg></button>`;
            }).join("");
        });
    </script>

</body>
</html>
```
FILE: styles.css
```
/* General */
* {
    box-sizing: border-box;
}
body {
    margin: 0;
    height: 100vh;
    display: flex;
    overflow: hidden;
    padding-left: 5px;
    background: linear-gradient(#0d4a80, #2a7fb8 50%, #124c7c);
    font-family: "Noto Sans CJK SC", sans-serif;
    font-size: 8px;
    color: #222;
}
button, input, select {
    font: inherit;
    color: inherit;
    margin: 0;
    padding: 0;
    border: 0;
    background: none;
    border-radius: 0;
}
select {
    appearance: none;
    background: #fbf9fb url("data:image/svg+xml,%3Csvg xmlns='http://www.w3.org/2000/svg' viewBox='0 0 6 4'%3E%3Cpath d='M0 0h6L3 4z' fill='%23999'/%3E%3C/svg%3E") no-repeat right 4px center / 5px 3px;
}
a {
    color: inherit;
    text-decoration: none;
}
.sprite {
    position: absolute;
    width: 0;
    height: 0;
}
.icon {
    display: block;
    flex: none;
    width: 12px;
    height: 12px;
    fill: none;
    stroke: currentColor;
}
.tools {
    display: flex;
    align-items: center;
    gap: 3px;
    color: #d8d8d8;
}
.tools button {
    flex: none;
}
.sep {
    flex: none;
    width: 1px;
    height: 12px;
    margin: 0 1px;
    background: #77777a;
}
.caret {
    flex: none;
    width: 4px;
    height: 3px;
    background: currentColor;
    clip-path: polygon(0 0, 100% 0, 50% 100%);
}
.swatch {
    flex: none;
    width: 7px;
    height: 7px;
    border: 1px solid #333;
    background: #fff;
}

/* WPS window */
.wps {
    flex: none;
    width: 195px;
    margin: 6px 0 2px;
    display: flex;
    flex-direction: column;
    background: #ececef;
    color: #444;
}
.wps-title {
    height: 31px;
    display: flex;
    align-items: flex-end;
    background: #343846;
    color: #ddd;
    position: relative;
}
.wps-home {
    display: flex;
    align-items: center;
    gap: 3px;
    width: 60px;
    height: 20px;
    padding-left: 8px;
    background: #4569a8;
    color: #e8eefc;
    font-size: 9px;
}
.wps-plus {
    width: 28px;
    height: 20px;
    font-size: 13px;
    line-height: 20px;
}
.wps-tab {
    width: 80px;
    height: 20px;
    background: #4a4a58;
}
.wps-min {
    position: absolute;
    right: 4px;
    top: 0;
    color: #777;
    font-size: 8px;
}
.wps-menu {
    height: 25px;
    display: flex;
    align-items: center;
    gap: 4px;
    padding: 0 10px;
    font-size: 9px;
    white-space: nowrap;
}
.wps-menu .icon {
    width: 10px;
    height: 10px;
}
.chev {
    width: 4px;
    height: 4px;
    border: solid #888;
    border-width: 0 1px 1px 0;
    transform: rotate(45deg);
}
.chev.up {
    width: 6px;
    height: 6px;
    transform: rotate(225deg);
}
.vline {
    width: 1px;
    height: 14px;
    margin-left: 3px;
    background: #ccc;
}
.more {
    color: #aaa;
    font-size: 11px;
    margin: 0 4px;
}
.pressed {
    width: 12px;
    height: 15px;
    padding-left: 4px;
    background: #b5bac9;
    border-left: 2px solid #5b86c6;
}
.find {
    display: flex;
    align-items: center;
    gap: 1px;
    margin-left: 6px;
}
.big {
    font-size: 12px;
    width: 13px;
}
.ribbon {
    padding: 0 8px;
    background: #cbcfd8;
}
.ribbon-inner {
    height: 46px;
    padding: 4px 5px;
    background: #f2f2f4;
    border-radius: 3px;
}
.ribbon-row {
    height: 18px;
    display: flex;
    align-items: center;
    gap: 5px;
    font-size: 12px;
    line-height: 16px;
}
.ribbon-row .icon {
    width: 11px;
    height: 11px;
}
.ribbon .tools {
    color: #666;
    gap: 4px;
}
.ribbon .tools.wide {
    gap: 6px;
}
.ribbon sup {
    font-size: 7px;
    line-height: 0;
}
.font-tools {
    display: flex;
    align-items: center;
    gap: 7px;
    width: 65px;
}
.under {
    border-bottom: 1px solid #555;
    line-height: 12px;
}
.shade {
    color: #666;
    text-shadow: 0 0 1px #999;
}
.pinyin {
    color: #5077ad;
    font-size: 11px;
}
.ribbon .justify {
    background: #c5c5c8;
    outline: 2px solid #c5c5c8;
}
.wps-body {
    flex: 1;
    min-height: 0;
    display: flex;
    background: #fff;
}
.doc {
    flex: 1;
    overflow: hidden;
    padding-left: 20px;
    font-size: 12px;
    line-height: 28px;
    color: #333;
}
.doc p {
    margin: 0;
    white-space: pre;
}
.doc p:first-child {
    margin-top: -19px;
}
.doc .in1 {
    padding-left: 18px;
}
.doc .in2 {
    padding-left: 24px;
}
.key {
    color: #6f8fc0;
}
.red {
    color: #e22a3c;
}
.wps-vscroll {
    width: 8px;
    background: #d3d3d5;
    display: flex;
    flex-direction: column;
    justify-content: flex-end;
    padding-bottom: 72px;
}
.wps-vscroll i {
    height: 172px;
    background: #ededed;
    border: 1px solid #a9a9ad;
    border-radius: 4px;
}
.wps-hscroll {
    height: 10px;
    padding: 1px 35px;
    background: #d0d0d2;
}
.wps-hscroll i {
    display: block;
    width: 52px;
    height: 8px;
    background: #f2f2f2;
    border: 1px solid #aaa;
    border-radius: 4px;
}
.zoombar {
    height: 18px;
    display: flex;
    align-items: center;
    gap: 4px;
    padding: 0 9px;
    font-size: 9px;
}
.zoombar button {
    font-size: 14px;
    line-height: 16px;
    width: 12px;
}
.zoombar .icon {
    width: 9px;
    height: 9px;
    margin-left: 4px;
}
.zoombar input {
    flex: 1;
    min-width: 0;
}
input[type="range"] {
    appearance: none;
    height: 10px;
    background: linear-gradient(#999, #999) center / 100% 1px no-repeat;
}
input[type="range"]::-webkit-slider-thumb {
    appearance: none;
    width: 9px;
    height: 9px;
    border: 1px solid #555;
    border-radius: 50%;
    background: #fafafa;
}

/* AutoCAD window frame */
.cad {
    flex: 1;
    min-width: 0;
    display: flex;
    flex-direction: column;
    margin-left: 1px;
    border: solid #3a7cae;
    border-width: 6px 5px 6px 5px;
    border-left-color: #62a6d4;
    outline: 1px solid #123a5c;
    background: #565658;
    position: relative;
}
.cad-title {
    height: 16px;
    display: flex;
    align-items: center;
    background: linear-gradient(90deg, #3483b8, #2d7db5 60%, #2f659c);
}
.app-btn {
    position: absolute;
    left: 0;
    top: 1px;
    width: 27px;
    height: 34px;
    background: linear-gradient(#b4b4b4, #4a4a4a);
    z-index: 1;
}
.app-btn svg {
    width: 20px;
    height: 20px;
}
.qat {
    display: flex;
    align-items: center;
    height: 16px;
    padding-left: 32px;
    background: #77787a;
    border-radius: 0 3px 3px 0;
}
.qat .ws {
    display: flex;
    align-items: center;
    gap: 3px;
    margin-left: 6px;
    color: #eee;
}
.ws select {
    width: 120px;
    background-color: transparent;
}
.cad-title h1 {
    margin: 0 0 0 118px;
    font: 9px/12px "Noto Sans", sans-serif;
    color: #0c2440;
    white-space: nowrap;
}
.cad-title h1 span {
    margin-left: 14px;
}
.info {
    display: flex;
    align-items: center;
    gap: 6px;
    height: 14px;
    margin-left: auto;
    padding: 0 4px;
    background: #85878a;
    color: #ddd;
}
.info input {
    width: 144px;
    height: 12px;
    background: #6d6f70;
}
.info input::placeholder {
    color: #aaa;
}
.info .tools {
    gap: 6px;
}
.winbtns {
    display: flex;
    margin-left: 12px;
    color: #fff;
}
.winbtns button {
    width: 20px;
    height: 14px;
    font-size: 9px;
    line-height: 12px;
    border: solid #5e8ebb;
    border-width: 0 1px 1px 0;
}
.winbtns button:last-child {
    width: 32px;
}
.menubar {
    height: 16px;
    display: flex;
    align-items: center;
    gap: 17px;
    padding-left: 34px;
    background: linear-gradient(#a0a0a0, #555);
    color: #ddd;
    line-height: 12px;
    white-space: nowrap;
}
.mdi {
    margin-left: auto;
    padding-right: 2px;
    color: #111;
    font-size: 10px;
}
.filetabs {
    height: 16px;
    display: flex;
    background: #3c3a3c;
    color: #ccc;
}
.filetabs button {
    padding: 0 29px;
    line-height: 14px;
    color: #999;
}
.filetabs .active {
    background: #5a585a;
    border-radius: 0 0 8px 0;
    color: #e5e5e5;
    padding: 0 28px;
}
.filetabs .add {
    padding: 0 10px;
}

/* Toolbars */
.toolbars {
    padding: 1px 0 2px 6px;
    background: #59575a;
    color: #666;
    font-family: "Noto Sans", "Noto Sans CJK SC", sans-serif;
}
.bar {
    height: 18px;
    display: flex;
    align-items: center;
    gap: 3px;
}
.bar > select, .combo {
    flex: none;
    height: 15px;
    border: 1px solid #ddd;
    background-color: #fbf9fb;
    padding-left: 12px;
    font-size: 9px;
}
.bar .near {
    padding-left: 2px;
}
.bar .style {
    margin: 0 1px;
}
.combo {
    display: flex;
    align-items: center;
    gap: 2px;
    padding-left: 2px;
}
.combo select {
    flex: 1;
    min-width: 0;
    height: 13px;
    padding-left: 2px;
}
.combo .icon {
    width: 9px;
    height: 9px;
}
.serif select {
    font-family: "Liberation Serif", serif;
}
.rule {
    width: 42px;
    height: 1px;
    background: #333;
}
.rule.short {
    width: 24px;
}
.w79 {
    width: 79px;
}
.w84 {
    width: 84px;
}
.w99 {
    width: 99px;
}
.w107 {
    width: 107px;
}
.bar > .w117 {
    width: 117px;
    padding-left: 4px;
}
.w199 {
    width: 199px;
}

/* Work area */
.work {
    flex: 1;
    min-height: 0;
    display: flex;
}
.side {
    flex: none;
    width: 19px;
    padding: 6px 4px 0 2px;
    background: #59595b;
}
.side .tools {
    flex-direction: column;
}
.side .sep {
    width: 12px;
    height: 1px;
    margin: 1px 0;
}
.modify {
    width: 21px;
    padding-right: 2px;
}
.view {
    flex: 1;
    min-width: 0;
    display: grid;
    grid-template-columns: 1fr 12px;
    grid-template-rows: 1fr 12px;
    background: #565658;
}
.canvas {
    position: relative;
    overflow: hidden;
    background: #1f2630;
    color: #d5d8dc;
    margin-right: 1px;
}
.vp-label {
    position: absolute;
    left: 2px;
    top: 4px;
    line-height: 12px;
}
.drawn-rect {
    position: absolute;
    left: 447px;
    top: 106px;
    width: 140px;
    height: 311px;
    border: 1px solid #aeb3b9;
}
.ucs {
    position: absolute;
    left: 280px;
    top: 285px;
    width: 54px;
    fill: none;
    stroke: #c5c9ce;
}
.compass {
    position: absolute;
    right: 9px;
    top: 10px;
    width: 92px;
    height: 92px;
    display: grid;
    grid-template: 16px 1fr 16px / 16px 1fr 16px;
    place-items: center;
    font-size: 12px;
    line-height: 16px;
    color: #a9adb3;
}
.ring {
    position: absolute;
    left: 6px;
    top: 6px;
    width: 80px;
    height: 80px;
    border: 8px solid #3c424c;
    border-radius: 50%;
}
.compass span {
    position: relative;
}
.n {
    grid-area: 1 / 2;
}
.w {
    grid-area: 2 / 1;
}
.compass button {
    grid-area: 2 / 2;
    width: 34px;
    height: 34px;
    background: #a3a9b0;
    color: #5b6068;
    font-size: 18px;
    line-height: 30px;
    position: relative;
}
.e {
    grid-area: 2 / 3;
}
.s {
    grid-area: 3 / 2;
}
.wcs {
    position: absolute;
    right: 39px;
    top: 113px;
    width: 32px;
    height: 12px;
    border-radius: 3px;
    background: #9a9fa6;
    color: #d5d8dc;
    font-size: 7px;
    line-height: 10px;
    text-align: left;
    padding-left: 4px;
}
.vscroll, .hscroll {
    display: flex;
    justify-content: space-between;
    align-items: center;
    background: #eceef0;
    font-size: 7px;
    line-height: 8px;
}
.vscroll {
    flex-direction: column;
    padding: 2px 0;
}
.vscroll i, .hscroll i {
    width: 10px;
    height: 10px;
    border: 1px solid #999;
    background: #d5d5d8;
}
.vscroll i {
    margin-top: 310px;
}
.hscroll {
    padding: 0 3px;
}
.hscroll i {
    margin-right: 140px;
}

/* Hatch dialog */
.dialog {
    position: absolute;
    right: 154px;
    top: 50px;
    width: 344px;
    padding: 0 4px 4px;
    background: #3a444f;
    border: 1px solid #8d979f;
    border-radius: 4px 4px 0 0;
    color: #222;
    line-height: 12px;
    white-space: nowrap;
}
.dialog header {
    height: 19px;
    display: flex;
    align-items: center;
    gap: 3px;
    margin: 0 -4px;
    padding-left: 4px;
    background: linear-gradient(90deg, #87939d, #6d7983 22%, #27323b 38%, #36424a 80%, #5d676e);
}
.dialog header svg {
    width: 10px;
    height: 10px;
    background: #e8dcdc;
}
.close {
    align-self: flex-start;
    width: 31px;
    height: 13px;
    margin: 0 3px 0 auto;
    background: linear-gradient(#d98a7e, #b93a2c 50%, #a82a1e);
    border: 1px solid #e0b0a8;
    border-top: 0;
    border-radius: 0 0 3px 3px;
    color: #fff;
    line-height: 10px;
}
.dlg-body {
    background: #f0f1f2;
    padding: 3px 8px 6px 7px;
}
.dlg-main {
    display: flex;
    gap: 14px;
}
.dlg-left {
    width: 199px;
}
.dlg-tabs {
    display: flex;
    align-items: flex-end;
}
.dlg-tabs button {
    height: 13px;
    padding: 0 3px;
    border: 1px solid #aaa;
    border-bottom: 0;
    background: #e4e4e5;
    line-height: 12px;
}
.dlg-tabs .on {
    height: 16px;
    background: #fcfcfc;
}
.page {
    border: 1px solid #a5a5a8;
    padding: 2px 7px 4px 8px;
    background: #fcfcfc;
}
fieldset {
    margin: 0 0 6px;
    padding: 0 0 0 4px;
    border: 0;
    position: relative;
}
fieldset:last-child {
    margin: 0;
}
legend {
    width: 100%;
    padding: 0;
    display: flex;
    align-items: center;
    gap: 3px;
    line-height: 12px;
}
legend::after {
    content: "";
    flex: 1;
    height: 1px;
    background: #ddd;
}
.row {
    height: 18px;
    display: flex;
    align-items: center;
    gap: 2px;
}
.row > label:first-child, .lab {
    width: 74px;
}
.row label, .origin label, .origin span, .chk {
    display: flex;
    align-items: center;
}
.off {
    color: #a2a2a4;
}
.dialog select {
    height: 13px;
    padding-left: 2px;
    border: 1px solid #8f8f92;
    background-color: #ececed;
    background-image: url("data:image/svg+xml,%3Csvg xmlns='http://www.w3.org/2000/svg' viewBox='0 0 6 4'%3E%3Cpath d='M0 0h6L3 4z' fill='%23111'/%3E%3C/svg%3E");
    background-position: right 2px center;
    line-height: 11px;
    color: #222;
    opacity: 1;
}
.dialog select:disabled {
    color: #888;
    border-color: #bbb;
    background-color: #f2f2f2;
    background-image: url("data:image/svg+xml,%3Csvg xmlns='http://www.w3.org/2000/svg' viewBox='0 0 6 4'%3E%3Cpath d='M0 0h6L3 4z' fill='%23999'/%3E%3C/svg%3E");
}
.s72 {
    width: 72px;
}
.s24 {
    width: 25px;
}
.dialog .mono {
    font-family: "Liberation Mono", monospace;
}
.selbox {
    height: 13px;
    display: flex;
    align-items: center;
    border: 1px solid #8f8f92;
    background: #ececed;
    padding-left: 3px;
}
.dialog .selbox select {
    flex: 1;
    min-width: 0;
    height: 11px;
    border: 0;
}
.swatch.none {
    background: linear-gradient(135deg, #fff 45%, #333 45%, #333 55%, #fff 55%);
}
.dots {
    width: 13px;
    height: 11px;
    border: 1px solid #bbb;
    border-radius: 2px;
    background: #f0f0f0;
    line-height: 6px;
}
.dots:enabled {
    border: 2px solid #4a9cc4;
    background: #d4eaf4;
}
.sample {
    width: 70px;
    height: 14px;
    stroke: #8f98a2;
    fill: #15202a;
}
.sample .dash {
    stroke: #fff;
}
.pair {
    display: grid;
    grid-template-columns: 76px 62px;
    grid-template-rows: 14px 14px;
    align-items: center;
    padding: 2px 0;
}
.dialog .flat {
    width: 61px;
    background-color: #fff;
    border-color: #ccc #fcfcfc #fcfcfc #ccc;
}
.dialog input[type="checkbox"] {
    appearance: none;
    flex: none;
    width: 9px;
    height: 9px;
    margin-right: 2px;
    border: 1px solid #a5a5a8;
    background: #f4f4f4;
}
.dialog input[type="checkbox"]:checked {
    background: #f4f4f4 url("data:image/svg+xml,%3Csvg xmlns='http://www.w3.org/2000/svg' viewBox='0 0 8 8'%3E%3Cpath d='M1 4l2 3 4-6' fill='none' stroke='%23333'/%3E%3C/svg%3E");
}
.dialog input[type="radio"] {
    appearance: none;
    width: 9px;
    height: 9px;
    margin-right: 2px;
    border: 1px solid #9a9a9d;
    border-radius: 50%;
    background: #ddd;
}
.dialog input[type="radio"]:checked {
    background: radial-gradient(#1a4650 35%, #b9ced2 50%);
}
.dialog input[type="text"] {
    width: 42px;
    height: 12px;
    padding-left: 2px;
    border: 1px solid #bbb;
    background: #fff;
}
.row.two > label:first-child {
    width: 74px;
}
.origin {
    padding-bottom: 3px;
}
.origin label, .origin span {
    height: 15px;
}
.origin > label:first-of-type {
    margin-top: 3px;
}
.origin-opts {
    display: flex;
    align-items: flex-end;
    gap: 12px;
    padding-left: 14px;
}
.pick {
    width: 16px;
    height: 15px;
    margin-right: 3px;
    padding: 1px;
    border: 1px solid #bbb;
}
.deep {
    padding-left: 19px;
}
.deep select {
    width: 81px;
}
.bricks {
    width: 30px;
    height: 30px;
    margin-bottom: 12px;
    fill: none;
}
.bricks .fill {
    fill: #8b98a8;
}
.bricks .gap {
    stroke: #d5dae0;
}
.bricks .edge {
    stroke: #44484e;
}
.dlg-right {
    flex: 1;
}
.dlg-right h2 {
    margin: 1px 0 0;
    font-size: 8px;
    font-weight: normal;
}
.dlg-right .opt {
    margin: 9px 0 2px;
}
.act {
    height: 22px;
    display: flex;
    align-items: center;
    gap: 7px;
}
.act button {
    width: 16px;
    height: 16px;
    border: 1px solid #a8a8aa;
    background: #f0f0f0;
}
.act svg {
    display: block;
    width: 14px;
    height: 14px;
    fill: none;
}
.act .g {
    stroke: #555c58;
}
.act.off .g {
    stroke: #aaa;
}
.act .gr {
    stroke: #21893a;
    stroke-width: 3;
}
.act .dk {
    stroke: #777;
}
.act .dkp {
    stroke: #333;
    stroke-width: 3;
}
.chk {
    height: 14px;
}
.stack {
    display: block;
    margin-top: 3px;
}
.stack select {
    display: block;
    width: 98px;
}
.trans {
    height: 18px;
    display: flex;
    align-items: center;
    gap: 8px;
    margin-top: 4px;
}
.dialog .trans input[type="text"] {
    width: 17px;
    border-color: #eee;
    text-align: center;
}
.trans input[type="range"] {
    width: 73px;
}
.trans input[type="range"]::-webkit-slider-thumb {
    width: 5px;
    border-radius: 1px;
}
.inherit {
    margin-top: 8px;
}
.dlg-body footer {
    display: flex;
    align-items: center;
    gap: 7px;
    margin-top: 6px;
}
.dlg-body footer button {
    width: 49px;
    height: 14px;
    border: 1px solid #8f8f92;
    background: #ececed;
    line-height: 12px;
}
.dlg-body footer button:disabled {
    color: #888;
    border-color: #c2c2c4;
}
.dlg-body footer .push {
    margin-left: auto;
}
.dlg-body footer .round {
    width: 13px;
    height: 13px;
    border-radius: 50%;
}
.round svg {
    display: block;
    width: 11px;
    fill: none;
    stroke: #222;
    stroke-width: 2;
}
.cursor {
    position: absolute;
    left: 222px;
    top: 34px;
    width: 10px;
    height: 14px;
}

/* Command line */
.command {
    height: 40px;
    display: flex;
    border-top: 1px solid #6c6c6c;
}
.cmd-side {
    width: 15px;
    display: flex;
    flex-direction: column;
    justify-content: space-around;
    align-items: center;
    padding-top: 6px;
    background: #555557;
    color: #eee;
}
.cmd-side .icon {
    width: 9px;
    height: 9px;
}
.cmd-main {
    flex: 1;
    display: flex;
    flex-direction: column;
    background: #fff;
}
.cmd-main pre {
    flex: 1;
    margin: 0;
    padding: 2px;
    background: #c6c5c3;
    border-bottom: 1px solid #888;
    font: 8px/10px "Liberation Mono", "Noto Sans CJK SC", monospace;
}
.prompt {
    height: 14px;
    display: flex;
    align-items: center;
    gap: 3px;
    padding-left: 3px;
    font-family: "Liberation Mono", monospace;
}
.prompt i {
    font-size: 7px;
    line-height: 9px;
    color: #777;
    border: 1px solid #bbb;
    font-style: normal;
}
.prompt input {
    flex: 1;
}

/* Status bar */
.status {
    height: 19px;
    display: flex;
    justify-content: space-between;
    background: #3d3b3d;
    color: #ddd;
    line-height: 12px;
}
.layouts {
    display: flex;
    align-items: flex-start;
    padding-left: 9px;
    gap: 1px;
}
.layouts button {
    padding: 0 8px;
    height: 14px;
    color: #999;
    background: #4a4a4c;
    clip-path: polygon(0 0, 100% 0, 85% 100%, 15% 100%);
}
.layouts .active {
    background: #777;
    color: #fff;
    font-weight: bold;
}
.status-right {
    display: flex;
    align-items: center;
    width: 807px;
    gap: 4px;
    padding-left: 6px;
    background: #525254;
    border-top: 1px solid #6e6e6e;
    white-space: nowrap;
}
.coords {
    width: 115px;
    font: 8px/12px "Noto Sans", sans-serif;
    color: #aaa;
}
.model {
    font-weight: bold;
    color: #fff;
}
.status .tools {
    gap: 4px;
}
.status .icon {
    width: 11px;
    height: 11px;
}
.status .blue {
    color: #2d86e8;
}
.scale {
    font: bold 8px/12px "Noto Sans", sans-serif;
}
.units {
    font-weight: bold;
    margin-right: 18px;
}

/* Floating overlays */
.banner {
    position: absolute;
    left: 47px;
    top: 10px;
    font-size: 31px;
    line-height: 38px;
    font-weight: 300;
    color: #f4f4f4;
    white-space: nowrap;
    text-shadow: 1px 0 #222, -1px 0 #222, 0 1px #222, 0 -1px #222;
}
.banner b {
    font-family: Inter, sans-serif;
    font-size: 32px;
    line-height: 32px;
    font-weight: 900;
}
.banner .next {
    margin-left: 12px;
}
.netspeed {
    position: absolute;
    right: 6px;
    bottom: 4px;
    display: flex;
    align-items: center;
    color: #eee;
}
.ball {
    width: 40px;
    height: 40px;
    border-radius: 50%;
    background: #3f464f;
    border: 2px solid #59626c;
    border-right-color: #5ec7b6;
    font: 16px/36px "Open Sans", sans-serif;
    text-align: center;
    z-index: 1;
}
.ball small {
    font-size: 8px;
}
.rates {
    width: 52px;
    height: 30px;
    margin-left: -12px;
    padding: 1px 4px 1px 14px;
    border-radius: 0 12px 12px 0;
    background: #23292f;
    font-size: 8px;
    line-height: 14px;
}
.rates span {
    display: flex;
    justify-content: flex-end;
}
.rates i {
    margin-right: auto;
    color: #3ea79b;
}
.rates small {
    font-size: 7px;
    color: #999;
}
```
